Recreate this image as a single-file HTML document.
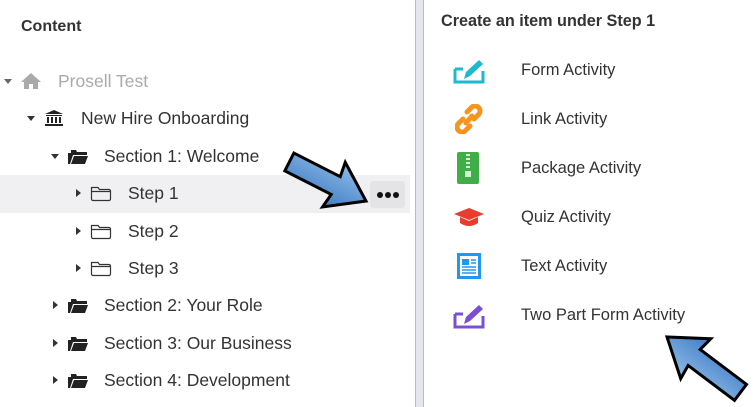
<!DOCTYPE html>
<html><head><meta charset="utf-8"><style>
body{margin:0;width:753px;height:407px;background:#fff;font-family:"Liberation Sans",sans-serif;position:relative;overflow:hidden;color:#333}
.t{position:absolute;font-size:17.5px;white-space:nowrap;line-height:20px}
.r{font-size:16.5px}
.c{position:absolute;width:0;height:0}
.down{border-left:4px solid transparent;border-right:4px solid transparent;border-top:5px solid #333}
.right{border-top:4px solid transparent;border-bottom:4px solid transparent;border-left:5px solid #333}
.ic{position:absolute}
</style></head><body>
<div class="t" style="left:21px;top:17px;font-weight:bold;font-size:16px">Content</div>
<div style="position:absolute;left:0;top:175px;width:410px;height:38px;background:#f0f0f2"></div>
<div style="position:absolute;left:370px;top:181px;width:35px;height:27px;background:#e4e4e6;border-radius:3px"></div>
<svg class="ic" style="left:370px;top:181px" width="35" height="27"><circle cx="10" cy="14" r="3" fill="#111"/><circle cx="18" cy="14" r="3" fill="#111"/><circle cx="26" cy="14" r="3" fill="#111"/></svg>
<div style="position:absolute;left:415px;top:0;width:7px;height:407px;background:#e6e6f0;border-left:1px solid #b8b8d0;border-right:1px solid #b8b8d0"></div>

<div class="c down" style="left:4px;top:79px;border-top-color:#666"></div>
<svg class="ic" style="left:20px;top:72px" width="22" height="18" viewBox="0 0 22 18"><path d="M11 1 L1 10 L4 10 L4 17 L9 17 L9 12 L13 12 L13 17 L18 17 L18 10 L21 10 Z" fill="#aaa"/></svg>
<div class="t" style="left:58px;top:71px;color:#aaa">Prosell Test</div>

<div class="c down" style="left:27px;top:116px"></div>
<svg class="ic" style="left:44px;top:109px" width="20" height="18" viewBox="0 0 20 18"><path d="M10 1 L1 5 L19 5 Z M2 6 H18 V7 H2 Z M3 8 H5 V14 H3 Z M7 8 H9 V14 H7 Z M11 8 H13 V14 H11 Z M15 8 H17 V14 H15 Z M1 15 H19 V17 H1 Z" fill="#222"/></svg>
<div class="t" style="left:81px;top:108px">New Hire Onboarding</div>

<div class="c down" style="left:51px;top:154px"></div>
<svg class="ic" style="left:67px;top:147px" width="22" height="18" viewBox="0 0 22 18"><path d="M1 17 L1 6 L4 6 L4 3 L9 3 L10 5 L20 5 L20 8 L6 8 L3 17 Z M4 17 L7 9 L21 9 L18 17 Z" fill="#222"/></svg>
<div class="t" style="left:104px;top:146px">Section 1: Welcome</div>

<div class="c right" style="left:76px;top:189px"></div>
<svg class="ic" style="left:90px;top:184px" width="22" height="18" viewBox="0 0 22 18"><path d="M1.5 3.5 H8 L9.5 5.5 H19 a1.5 1.5 0 0 1 1.5 1.5 V15 a1.5 1.5 0 0 1 -1.5 1.5 H3 a1.5 1.5 0 0 1 -1.5 -1.5 Z M1.5 7.5 H20.5" fill="none" stroke="#333" stroke-width="1.2"/></svg>
<div class="t" style="left:128px;top:183px">Step 1</div>

<div class="c right" style="left:76px;top:227px"></div>
<svg class="ic" style="left:90px;top:222px" width="22" height="18" viewBox="0 0 22 18"><path d="M1.5 3.5 H8 L9.5 5.5 H19 a1.5 1.5 0 0 1 1.5 1.5 V15 a1.5 1.5 0 0 1 -1.5 1.5 H3 a1.5 1.5 0 0 1 -1.5 -1.5 Z M1.5 7.5 H20.5" fill="none" stroke="#333" stroke-width="1.2"/></svg>
<div class="t" style="left:128px;top:221px">Step 2</div>

<div class="c right" style="left:76px;top:264px"></div>
<svg class="ic" style="left:90px;top:259px" width="22" height="18" viewBox="0 0 22 18"><path d="M1.5 3.5 H8 L9.5 5.5 H19 a1.5 1.5 0 0 1 1.5 1.5 V15 a1.5 1.5 0 0 1 -1.5 1.5 H3 a1.5 1.5 0 0 1 -1.5 -1.5 Z M1.5 7.5 H20.5" fill="none" stroke="#333" stroke-width="1.2"/></svg>
<div class="t" style="left:128px;top:258px">Step 3</div>

<div class="c right" style="left:53px;top:301px"></div>
<svg class="ic" style="left:67px;top:296px" width="22" height="18" viewBox="0 0 22 18"><path d="M1 17 L1 6 L4 6 L4 3 L9 3 L10 5 L20 5 L20 8 L6 8 L3 17 Z M4 17 L7 9 L21 9 L18 17 Z" fill="#222"/></svg>
<div class="t" style="left:104px;top:295px">Section 2: Your Role</div>

<div class="c right" style="left:53px;top:339px"></div>
<svg class="ic" style="left:67px;top:334px" width="22" height="18" viewBox="0 0 22 18"><path d="M1 17 L1 6 L4 6 L4 3 L9 3 L10 5 L20 5 L20 8 L6 8 L3 17 Z M4 17 L7 9 L21 9 L18 17 Z" fill="#222"/></svg>
<div class="t" style="left:104px;top:333px">Section 3: Our Business</div>

<div class="c right" style="left:53px;top:376px"></div>
<svg class="ic" style="left:67px;top:371px" width="22" height="18" viewBox="0 0 22 18"><path d="M1 17 L1 6 L4 6 L4 3 L9 3 L10 5 L20 5 L20 8 L6 8 L3 17 Z M4 17 L7 9 L21 9 L18 17 Z" fill="#222"/></svg>
<div class="t" style="left:104px;top:370px">Section 4: Development</div>

<div class="t" style="left:441px;top:11px;font-weight:bold;font-size:16.2px;color:#333">Create an item under Step 1</div>

<svg class="ic" style="left:453px;top:57px" width="34" height="28" viewBox="0 0 34 28"><path d="M2 12 V25 H30 V14 M2 12 H10" fill="none" stroke="#1fb8d0" stroke-width="3"/><path d="M11 22 L13 15 L26 3 L30 7 L17 19 Z" fill="#1fb8d0"/></svg>
<div class="t r" style="left:521px;top:60px">Form Activity</div>

<svg class="ic" style="left:455px;top:104px" width="28" height="30" viewBox="0 0 28 30"><g fill="none" stroke="#f7941d" stroke-width="5" stroke-linecap="round"><path d="M12 8 L17 3 a5 5 0 0 1 7 7 L19 15"/><path d="M15 22 L10 27 a5 5 0 0 1 -7 -7 L8 15"/><path d="M11 19 L17 12"/></g></svg>
<div class="t r" style="left:521px;top:109px">Link Activity</div>

<svg class="ic" style="left:457px;top:152px" width="22" height="32" viewBox="0 0 22 32"><rect x="0" y="0" width="22" height="32" rx="2" fill="#3fae49"/><path d="M9 2h4v2h-4zM9 6h4v2h-4zM9 10h4v2h-4zM9 14h4v2h-4zM8 19h6v6h-6z" fill="#d8f0da"/></svg>
<div class="t r" style="left:521px;top:158px">Package Activity</div>

<svg class="ic" style="left:453px;top:206px" width="32" height="22" viewBox="0 0 32 22"><path d="M16 2 L31 8 L16 14 L1 8 Z" fill="#e83c2e"/><path d="M7 11 V17 Q16 23 25 17 V11 L16 15 Z" fill="#e83c2e"/></svg>
<div class="t r" style="left:521px;top:207px">Quiz Activity</div>

<svg class="ic" style="left:457px;top:253px" width="24" height="26" viewBox="0 0 24 26"><rect x="1.5" y="1.5" width="21" height="23" fill="none" stroke="#2196f3" stroke-width="3"/><rect x="5" y="6" width="7" height="6" fill="#2196f3"/><path d="M14 7h5M14 10h5M5 14h14M5 17h14M5 20h14" stroke="#2196f3" stroke-width="1.5"/></svg>
<div class="t r" style="left:521px;top:256px">Text Activity</div>

<svg class="ic" style="left:453px;top:302px" width="34" height="28" viewBox="0 0 34 28"><path d="M2 12 V25 H30 V14 M2 12 H10" fill="none" stroke="#7b4fd0" stroke-width="3"/><path d="M11 22 L13 15 L26 3 L30 7 L17 19 Z" fill="#7b4fd0"/></svg>
<div class="t r" style="left:521px;top:305px">Two Part Form Activity</div>

<svg style="position:absolute;left:0;top:0" width="753" height="407">
<defs><linearGradient id="g" x1="0" y1="0" x2="0" y2="1"><stop offset="0" stop-color="#8fbbe8"/><stop offset="1" stop-color="#3f7cc4"/></linearGradient></defs>
<g transform="translate(366,201) rotate(27)"><polygon points="-86,-10 -34,-10 -36,-25 0,0 -36,25 -34,10 -86,10" fill="url(#g)" stroke="#000" stroke-width="3"/></g>
<g transform="translate(667,337) rotate(217)"><polygon points="-92,-10 -34,-10 -36,-25 0,0 -36,25 -34,10 -92,10" fill="url(#g)" stroke="#000" stroke-width="3"/></g>
</svg>
</body></html>
